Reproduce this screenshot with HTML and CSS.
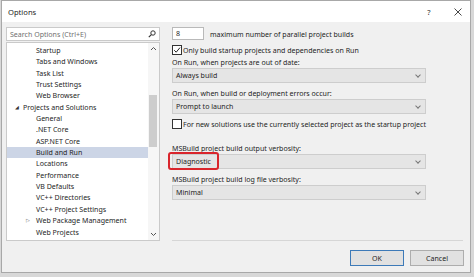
FILE: index.html
```html
<!doctype html>
<html>
<head>
<title>Options</title>
<meta name=viewport content="width=device-width, initial-scale=1">
<link rel="stylesheet" href="styles.css">
</head>
<body>
<div class="dialog">

<div class="titlebar">
    <span class="title">Options</span>
    <span class="help">?</span>
    <span class="close">
        <svg width="8" height="8" viewBox="0 0 8 8"><path d="M0.5 0.5 L7.5 7.5 M7.5 0.5 L0.5 7.5" stroke="#333" stroke-width="0.9" fill="none"/></svg>
    </span>
</div>

<div class="content">

<div class="leftcol">
    <div class="search">
        <span class="placeholder">Search Options (Ctrl+E)</span>
        <svg class="glass" width="8" height="8" viewBox="0 0 8 8"><circle cx="5" cy="3" r="2.2" stroke="#333" stroke-width="1" fill="none"/><path d="M3.4 4.6 L0.8 7.2" stroke="#333" stroke-width="1.2"/></svg>
    </div>
    <div class="tree">
        <ul class="items">
            <li class="child">Startup</li>
            <li class="child">Tabs and Windows</li>
            <li class="child">Task List</li>
            <li class="child">Trust Settings</li>
            <li class="child">Web Browser</li>
            <li class="parent"><span class="twisty">&#9698;</span>Projects and Solutions</li>
            <li class="child">General</li>
            <li class="child">.NET Core</li>
            <li class="child">ASP.NET Core</li>
            <li class="child selected">Build and Run</li>
            <li class="child">Locations</li>
            <li class="child">Performance</li>
            <li class="child">VB Defaults</li>
            <li class="child">VC++ Directories</li>
            <li class="child">VC++ Project Settings</li>
            <li class="child"><span class="twisty">&#9655;</span>Web Package Management</li>
            <li class="child">Web Projects</li>
        </ul>
        <div class="scrollbar">
            <div class="arrow">
                <svg width="7" height="5" viewBox="0 0 7 5"><path d="M1 4 L3.5 1.5 L6 4" stroke="#555" stroke-width="1" fill="none"/></svg>
            </div>
            <div class="track"><div class="thumb"></div></div>
            <div class="arrow">
                <svg width="7" height="5" viewBox="0 0 7 5"><path d="M1 1 L3.5 3.5 L6 1" stroke="#555" stroke-width="1" fill="none"/></svg>
            </div>
        </div>
    </div>
</div>

<div class="rightcol">
    <div class="row">
        <div class="numbox">8</div>
        <span class="numlabel">maximum number of parallel project builds</span>
    </div>

    <div class="check first">
        <span class="box">
            <svg width="8" height="8" viewBox="0 0 8 8"><path d="M1.2 4.2 L3.2 6.2 L7 1.6" stroke="#222" stroke-width="1" fill="none"/></svg>
        </span>
        Only build startup projects and dependencies on Run
    </div>

    <div class="label">On Run, when projects are out of date:</div>
    <div class="dropdown">Always build<span class="chev"></span></div>

    <div class="label">On Run, when build or deployment errors occur:</div>
    <div class="dropdown">Prompt to launch<span class="chev"></span></div>

    <div class="check">
        <span class="box"></span>
        For new solutions use the currently selected project as the startup project
    </div>

    <div class="label msbuild">MSBuild project build output verbosity:</div>
    <div class="dropdown">Diagnostic<span class="chev"></span><span class="marker"></span></div>

    <div class="label">MSBuild project build log file verbosity:</div>
    <div class="dropdown">Minimal<span class="chev"></span></div>

    <div class="footer">
        <hr class="sep">
        <div class="buttons">
            <button class="btn default">OK</button>
            <button class="btn">Cancel</button>
        </div>
    </div>
</div>

</div>
</div>
</body>
</html>
```

FILE: styles.css
```css
body {
    margin: 0;
    background-color: #d8d8d8;
    font-family: "Noto Sans", "DejaVu Sans", sans-serif;
    font-size: 7.05px;
    color: #1e1e1e;
}

.dialog {
    margin-left: 1px;
    width: 470px;
    height: 273px;
    box-sizing: border-box;
    border: 1px solid #a8a8a8;
    background-color: #f0f0f0;
    display: flex;
    flex-direction: column;
}

/* title bar */
.titlebar {
    height: 21px;
    flex: none;
    background-color: #fff;
    display: flex;
    align-items: center;
    padding: 0 6px 0 6px;
}
.title {
    font-size: 7.6px;
}
.help {
    margin-left: auto;
    width: 10px;
    text-align: center;
    font-size: 7.6px;
    color: #333;
}
.close {
    margin-left: 18px;
    width: 12px;
    display: flex;
    justify-content: center;
}

.content {
    flex: 1;
    display: flex;
    gap: 12px;
    padding: 5px 6px 6px 4px;
}

/* left side: search and tree */
.leftcol {
    width: 154px;
    flex: none;
    display: flex;
    flex-direction: column;
}
.search {
    height: 14px;
    box-sizing: border-box;
    border: 1px solid #cacaca;
    background-color: #fff;
    display: flex;
    align-items: center;
    padding: 0 3px;
    color: #707070;
}
.glass {
    margin-left: auto;
}
.tree {
    margin-top: 1px;
    height: 199px;
    box-sizing: border-box;
    border: 1px solid #cacaca;
    background-color: #fff;
    display: flex;
}
.items {
    list-style: none;
    margin: 0;
    padding: 2px 0 0 0;
    flex: 1;
    overflow: hidden;
}
.items li {
    height: 11.35px;
    line-height: 11.35px;
    white-space: nowrap;
    position: relative;
}
.items li.child {
    padding-left: 29px;
}
.items li.parent {
    padding-left: 16px;
}
.items li.selected {
    background-color: #ccd5e6;
}
.twisty {
    position: absolute;
    font-size: 5px;
    color: #333;
    left: 8px;
}
.child .twisty {
    left: 19px;
    color: #555;
}
.scrollbar {
    width: 11px;
    flex: none;
    background-color: #f6f6f6;
    display: flex;
    flex-direction: column;
}
.arrow {
    height: 11px;
    display: flex;
    align-items: center;
    justify-content: center;
}
.track {
    flex: 1;
    padding-top: 41px;
}
.thumb {
    margin: 0 2px 0 1px;
    height: 52px;
    background-color: #cdcdcd;
}

/* right side: settings */
.rightcol {
    flex: 1;
    display: flex;
    flex-direction: column;
}
.row {
    display: flex;
    align-items: center;
    height: 13px;
}
.numbox {
    width: 32px;
    height: 13px;
    box-sizing: border-box;
    border: 1px solid #b9b9b9;
    background-color: #fff;
    padding-left: 3px;
    line-height: 11px;
}
.numlabel {
    margin-left: 6px;
}
.check {
    display: flex;
    align-items: center;
    height: 10px;
    margin-top: 5px;
}
.box {
    width: 10px;
    height: 10px;
    box-sizing: border-box;
    border: 1px solid #333;
    background-color: #fff;
    margin-right: 1px;
    display: flex;
    align-items: center;
    justify-content: center;
}
.label {
    height: 10px;
    line-height: 10px;
    margin-top: 5px;
}
.check.first + .label {
    margin-top: 2px;
}
.label.msbuild {
    margin-top: 14px;
}
.dropdown {
    position: relative;
    margin-top: 1px;
    width: 254px;
    height: 15px;
    box-sizing: border-box;
    border: 1px solid #cdcdcd;
    background-color: #e5e5e5;
    padding-left: 3px;
    line-height: 13px;
}
.chev {
    position: absolute;
    right: 5px;
    top: 4px;
    width: 3px;
    height: 3px;
    border-right: 1px solid #777;
    border-bottom: 1px solid #777;
    transform: rotate(45deg);
}
.marker {
    position: absolute;
    left: -5px;
    top: -3px;
    width: 51px;
    height: 18px;
    box-sizing: border-box;
    border: 2px solid #d9252c;
    border-radius: 3px;
}

/* bottom buttons */
.footer {
    margin-top: auto;
}
.sep {
    margin: 0 1px 9px 0;
    border: none;
    border-top: 1px solid #d6d6d6;
}
.buttons {
    display: flex;
    justify-content: flex-end;
    gap: 6px;
}
.btn {
    width: 54px;
    height: 16px;
    padding: 0;
    font-family: inherit;
    font-size: 7.05px;
    color: #1e1e1e;
    background-color: #e1e1e1;
    border: 1px solid #adadad;
}
.btn.default {
    border-color: #3d7ab8;
}
```
